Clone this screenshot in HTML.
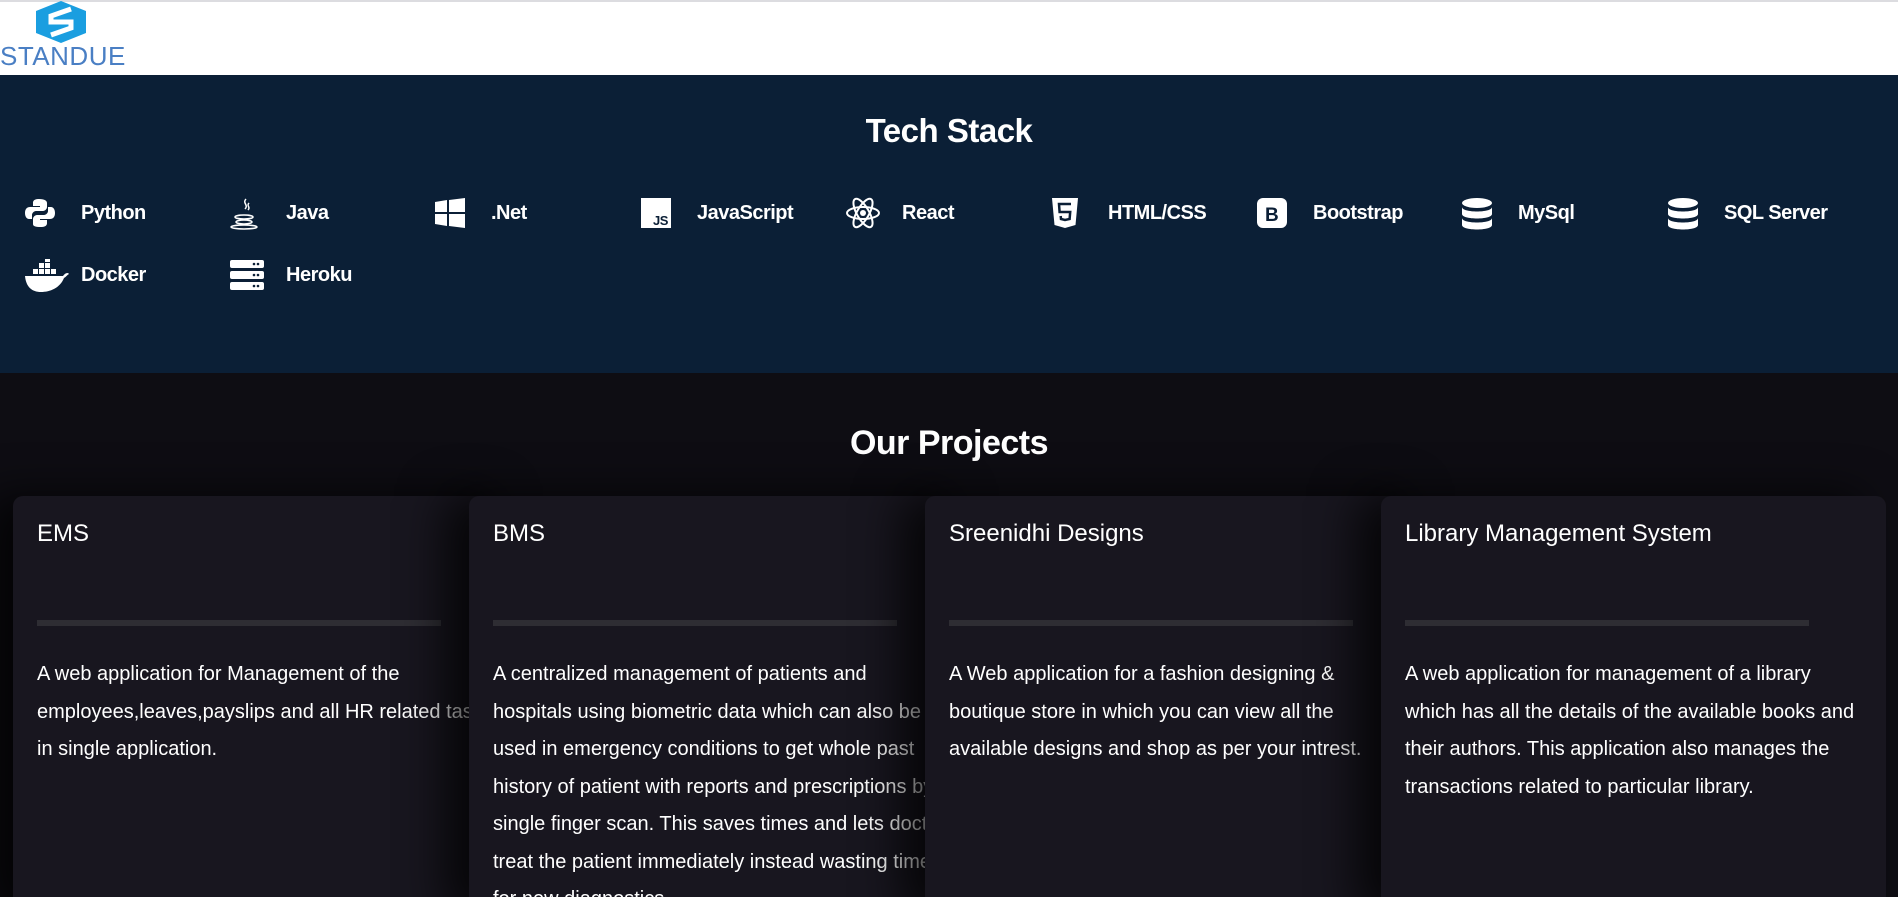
<!DOCTYPE html>
<html><head><meta charset="utf-8"><style>
*{margin:0;padding:0;box-sizing:border-box}
html,body{width:1898px;height:897px;overflow:hidden;background:#0d0c12;font-family:"Liberation Sans",sans-serif}
.hdr{height:75px;background:#fff;border-top:2px solid #dcdce0;position:relative}
.logo-t{position:absolute;left:0;top:39px;font-size:26px;color:#4a7fc4;letter-spacing:0.5px}
.tech{position:absolute;top:75px;left:0;width:1898px;height:298px;background:#0b1f36;color:#fff}
.tech h2{position:absolute;top:37px;width:100%;text-align:center;font-size:33px;font-weight:bold;letter-spacing:-0.5px}
.it{position:absolute;display:flex;align-items:center;height:40px;font-size:20px;font-weight:bold;letter-spacing:-0.5px}
.it svg{position:absolute;left:0;top:4px}
.it span{position:absolute;left:57px;white-space:nowrap}
.proj{position:absolute;top:373px;left:0;width:1898px;height:524px;background:#0e0d13;overflow:hidden}
.proj h2{position:absolute;top:51px;width:100%;text-align:center;font-size:34px;font-weight:bold;color:#fff;letter-spacing:-0.5px}
.card{position:absolute;top:123px;width:505px;height:420px;background:#18161f;border-radius:10px;box-shadow:-25px 0 45px rgba(0,0,0,.75);color:#fff}
.card h3{position:absolute;left:24px;top:24px;font-size:24px;font-weight:normal}
.card .d{position:absolute;left:24px;top:124px;width:404px;height:6px;background:#2e2d33}
.card p{position:absolute;left:24px;top:160px;font-size:20px;line-height:37.5px;white-space:nowrap}
</style></head><body>
<div class="hdr">
<svg style="position:absolute;left:34px;top:-1px" width="54" height="42" viewBox="0 0 54 42"><polygon points="27,0 52,10 52,32 27,42 2,32 2,10" fill="#1a9ee0"/><path d="M37 8 L17 15 L17 21 L37 21 L37 27 L17 34" stroke="#fff" stroke-width="5" fill="none"/></svg>
<div class="logo-t">STANDUE</div>
</div>
<div class="tech">
<h2>Tech Stack</h2>
<div class="it" style="left:24px;top:118px"><svg width="32" height="32" viewBox="0 0 32 32"><path d="M15 2c-6 0-6 3-6 4v3h7v1H6c-3 0-5 2-5 6s2 6 4 6h3v-4c0-2 2-4 4-4h7c2 0 4-2 4-4V6c0-2-2-4-8-4z" fill="#fff"/><path d="M17 30c6 0 6-3 6-4v-3h-7v-1h10c3 0 5-2 5-6s-2-6-4-6h-3v4c0 2-2 4-4 4h-7c-2 0-4 2-4 4v5c0 2 2 3 8 3z" fill="#fff"/></svg><span>Python</span></div>
<div class="it" style="left:229px;top:118px"><svg width="32" height="34" viewBox="0 0 32 34"><path d="M17 2c-4 4 3 6-1 10M20 6c-3 3 2 4-1 7" stroke="#fff" stroke-width="1.5" fill="none"/><ellipse cx="15" cy="20" rx="9" ry="2" fill="none" stroke="#fff" stroke-width="1.5"/><ellipse cx="15" cy="25" rx="8" ry="2" fill="none" stroke="#fff" stroke-width="1.5"/><ellipse cx="15" cy="30" rx="13" ry="2" fill="none" stroke="#fff" stroke-width="1.5"/></svg><span>Java</span></div>
<div class="it" style="left:434px;top:118px"><svg width="32" height="32" viewBox="0 0 32 32"><path d="M1 5l12-2v12H1zM15 3l16-2v14H15zM1 17h12v12L1 27zM15 17h16v14l-16-2z" fill="#fff"/></svg><span>.Net</span></div>
<div class="it" style="left:640px;top:118px"><svg width="32" height="32" viewBox="0 0 32 32"><rect x="1" y="1" width="30" height="30" fill="#fff"/><text x="13" y="28" font-family="Liberation Sans" font-weight="bold" font-size="13" fill="#0b1f36">JS</text></svg><span>JavaScript</span></div>
<div class="it" style="left:845px;top:118px"><svg width="36" height="32" viewBox="0 0 36 32"><g fill="none" stroke="#fff" stroke-width="2"><ellipse cx="18" cy="16" rx="16" ry="6"/><ellipse cx="18" cy="16" rx="16" ry="6" transform="rotate(60 18 16)"/><ellipse cx="18" cy="16" rx="16" ry="6" transform="rotate(-60 18 16)"/></g><circle cx="18" cy="16" r="3" fill="#fff"/></svg><span>React</span></div>
<div class="it" style="left:1051px;top:118px"><svg width="28" height="32" viewBox="0 0 28 32"><path d="M1 1h26l-2.5 27L14 31 3.5 28z" fill="#fff"/><path d="M20 7H8l.6 8h10.6l-.6 7L14 23l-4-1-.3-3" stroke="#0b1f36" stroke-width="2.5" fill="none"/></svg><span>HTML/CSS</span></div>
<div class="it" style="left:1256px;top:118px"><svg width="32" height="32" viewBox="0 0 32 32"><rect x="1" y="1" width="30" height="30" rx="6" fill="#fff"/><text x="9" y="24" font-family="Liberation Sans" font-weight="bold" font-size="19" fill="#0b1f36">B</text></svg><span>Bootstrap</span></div>
<div class="it" style="left:1461px;top:118px"><svg width="32" height="34" viewBox="0 0 32 34"><ellipse cx="16" cy="6" rx="15" ry="5" fill="#fff"/><path d="M1 10c0 6 30 6 30 0v7c0 6-30 6-30 0zM1 21c0 6 30 6 30 0v7c0 6-30 6-30 0z" fill="#fff"/></svg><span>MySql</span></div>
<div class="it" style="left:1667px;top:118px"><svg width="32" height="34" viewBox="0 0 32 34"><ellipse cx="16" cy="6" rx="15" ry="5" fill="#fff"/><path d="M1 10c0 6 30 6 30 0v7c0 6-30 6-30 0zM1 21c0 6 30 6 30 0v7c0 6-30 6-30 0z" fill="#fff"/></svg><span>SQL Server</span></div>
<div class="it" style="left:24px;top:180px"><svg width="46" height="34" viewBox="0 0 46 34"><g fill="#fff"><rect x="9" y="10" width="5" height="5"/><rect x="15" y="10" width="5" height="5"/><rect x="21" y="10" width="5" height="5"/><rect x="15" y="4" width="5" height="5"/><rect x="21" y="4" width="5" height="5"/><rect x="21" y="-1" width="5" height="4"/><rect x="27" y="10" width="5" height="5"/><path d="M1 17h38c2-3 5-4 6-2-2 1-3 3-5 4-4 10-14 14-23 14C8 33 2 28 1 17z"/></g></svg><span>Docker</span></div>
<div class="it" style="left:229px;top:180px"><svg width="36" height="32" viewBox="0 0 36 32"><g fill="#fff"><rect x="1" y="1" width="34" height="8" rx="2"/><rect x="1" y="12" width="34" height="8" rx="2"/><rect x="1" y="23" width="34" height="8" rx="2"/></g><g fill="#0b1f36"><circle cx="25" cy="5" r="1.3"/><circle cx="29" cy="5" r="1.3"/><circle cx="25" cy="16" r="1.3"/><circle cx="29" cy="16" r="1.3"/><circle cx="25" cy="27" r="1.3"/><circle cx="29" cy="27" r="1.3"/></g></svg><span>Heroku</span></div>
</div>
<div class="proj">
<h2>Our Projects</h2>
<div class="card" style="left:13px"><h3>EMS</h3><div class="d"></div><p>A web application for Management of the<br>employees,leaves,payslips and all HR related tasks<br>in single application.</p></div>
<div class="card" style="left:469px"><h3>BMS</h3><div class="d"></div><p>A centralized management of patients and<br>hospitals using biometric data which can also be<br>used in emergency conditions to get whole past<br>history of patient with reports and prescriptions by<br>single finger scan. This saves times and lets doctors<br>treat the patient immediately instead wasting time<br>for new diagnostics.</p></div>
<div class="card" style="left:925px"><h3>Sreenidhi Designs</h3><div class="d"></div><p>A Web application for a fashion designing &amp;<br>boutique store in which you can view all the<br>available designs and shop as per your intrest.</p></div>
<div class="card" style="left:1381px"><h3>Library Management System</h3><div class="d"></div><p>A web application for management of a library<br>which has all the details of the available books and<br>their authors. This application also manages the<br>transactions related to particular library.</p></div>
</div>
</body></html>
